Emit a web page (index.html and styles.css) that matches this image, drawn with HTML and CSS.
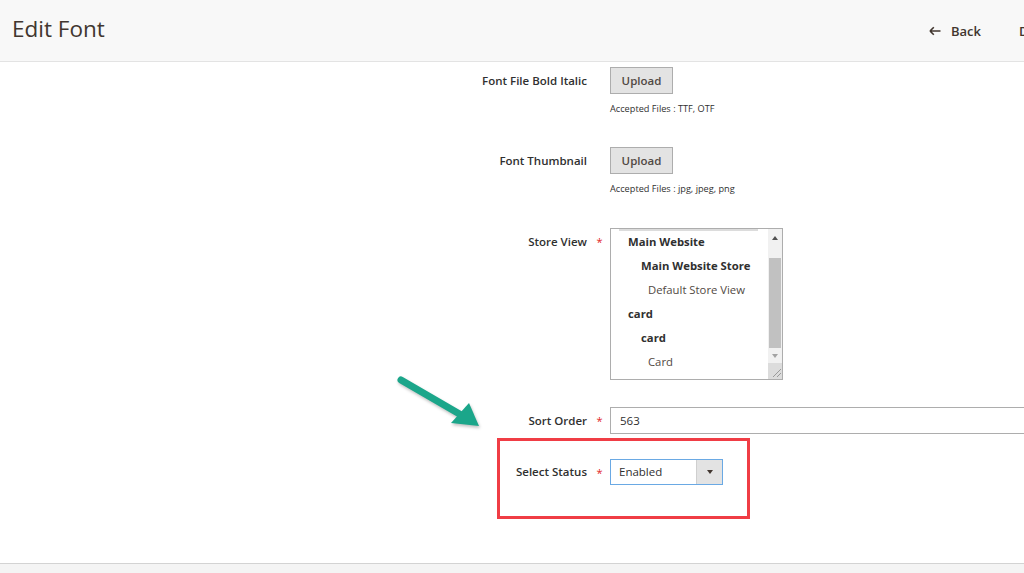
FILE: index.html
```html
<!DOCTYPE html>
<html lang="en">
<head>
<meta charset="utf-8">
<title>Edit Font</title>
<link rel="stylesheet" href="styles.css">
</head>
<body>
<header class="page-header">
  <h1 class="page-title">Edit Font</h1>
  <div class="page-actions">
    <button class="action-back" type="button">
      <svg class="back-icon" width="12" height="10" viewBox="0 0 12 10"><path d="M1 5H11.5M1 5L4.8 1.2M1 5L4.8 8.8" fill="none" stroke="#41362f" stroke-width="1.6"/></svg>
      <span>Back</span>
    </button>
    <button class="action-plain" type="button">Delete</button>
  </div>
</header>

<main class="content">
  <div class="field field-1">
    <div class="field-label">Font File Bold Italic</div>
    <div class="field-star"></div>
    <div class="field-control">
      <button class="upload-btn" type="button">Upload</button>
      <div class="note">Accepted Files : TTF, OTF</div>
    </div>
  </div>

  <div class="field field-2">
    <div class="field-label">Font Thumbnail</div>
    <div class="field-star"></div>
    <div class="field-control">
      <button class="upload-btn" type="button">Upload</button>
      <div class="note">Accepted Files : jpg, jpeg, png</div>
    </div>
  </div>

  <div class="field field-3">
    <div class="field-label">Store View</div>
    <div class="field-star">*</div>
    <div class="field-control">
      <div class="multiselect">
        <div class="ms-list">
          <div class="ms-scrolled"></div>
          <div class="ms-item lvl-1">Main Website</div>
          <div class="ms-item lvl-2">Main Website Store</div>
          <div class="ms-item lvl-3">Default Store View</div>
          <div class="ms-item lvl-1">card</div>
          <div class="ms-item lvl-2">card</div>
          <div class="ms-item lvl-3">Card</div>
        </div>
        <div class="ms-scrollbar">
          <div class="sb-btn sb-up"><span class="tri-up"></span></div>
          <div class="sb-gap"></div>
          <div class="sb-thumb"></div>
          <div class="sb-gap2"></div>
          <div class="sb-btn sb-down"><span class="tri-down"></span></div>
          <div class="sb-corner">
            <svg width="14" height="15" viewBox="0 0 14 15"><path d="M5 14L13 6M9 14L13 10" stroke="#9a9a9a" stroke-width="1"/></svg>
          </div>
        </div>
      </div>
    </div>
  </div>

  <div class="field field-4">
    <div class="field-label">Sort Order</div>
    <div class="field-star">*</div>
    <div class="field-control grow">
      <div class="text-input">563</div>
    </div>
  </div>

  <div class="field field-5">
    <div class="field-label">Select Status</div>
    <div class="field-star">*</div>
    <div class="field-control">
      <div class="select">
        <span class="select-value">Enabled</span>
        <span class="select-arrow"><span class="tri-down dark"></span></span>
      </div>
    </div>
  </div>

  <div class="highlight-box"></div>
  <svg class="pointer-arrow" width="100" height="70" viewBox="390 365 100 70">
    <g class="arrow-shape">
      <path d="M401 380L463 416" stroke="#1ba68a" stroke-width="7" stroke-linecap="round" fill="none"/>
      <polygon points="479,426 451,423 469,403" fill="#1ba68a"/>
    </g>
  </svg>
</main>

<footer class="page-footer"></footer>
</body>
</html>
```

FILE: styles.css
```css
* { box-sizing: border-box; }

html, body {
  margin: 0;
  padding: 0;
  width: 1024px;
  height: 573px;
  overflow: hidden;
  background: #ffffff;
  font-family: "Open Sans", "Noto Sans", sans-serif;
  color: #303030;
}

.page-header {
  height: 62px;
  background: #f8f8f8;
  border-bottom: 1px solid #e3e3e3;
  display: flex;
  align-items: center;
}

.page-title {
  flex: 1;
  margin: 0;
  padding-left: 12px;
  font-size: 22.5px;
  font-weight: 400;
  color: #41362f;
  line-height: 1;
  padding-bottom: 2px;
}

.page-actions {
  width: 95px;
  display: flex;
  align-items: center;
  gap: 38px;
  white-space: nowrap;
}

.action-back, .action-plain {
  border: 0;
  background: transparent;
  padding: 0;
  font-family: inherit;
  font-size: 13px;
  font-weight: 600;
  color: #41362f;
  display: flex;
  align-items: center;
  gap: 10px;
}

.back-icon { display: block; }

.content {
  position: relative;
  height: 501px;
  padding-top: 5px;
}

.field {
  display: flex;
  align-items: flex-start;
}

.field-2 { margin-top: 31px; }
.field-3 { margin-top: 32px; }
.field-4 { margin-top: 27px; }
.field-5 { margin-top: 25px; }

.field-label {
  width: 587px;
  text-align: right;
  font-size: 11.5px;
  font-weight: 600;
  line-height: 27px;
  color: #303030;
}

.field-5 .field-label { line-height: 26px; }

.field-star {
  width: 23px;
  text-align: center;
  color: #e22626;
  font-size: 11px;
  line-height: 27px;
  padding-left: 2px;
}

.field-control.grow { flex: 1; }

.upload-btn {
  display: block;
  width: 63px;
  height: 27px;
  background: #e3e3e3;
  border: 1px solid #adadad;
  font-family: inherit;
  font-size: 11.5px;
  font-weight: 600;
  color: #514943;
  padding: 0;
}

.note {
  margin-top: 8px;
  font-size: 9.2px;
  line-height: 14px;
  color: #303030;
}

.multiselect {
  width: 173px;
  height: 152px;
  border: 1px solid #adadad;
  display: flex;
  background: #fff;
}

.ms-list {
  flex: 1;
  padding-top: 0;
}

.ms-scrolled {
  height: 2px;
  margin: 0 10px 0 8px;
  background: #dcdcdc;
  margin-bottom: -1px;
}

.ms-item {
  font-size: 11.3px;
  line-height: 24px;
  white-space: nowrap;
}

.ms-item.lvl-1 { padding-left: 17px; font-weight: 700; color: #303030; }
.ms-item.lvl-2 { padding-left: 30px; font-weight: 700; color: #303030; }
.ms-item.lvl-3 { padding-left: 37px; font-weight: 400; color: #514943; }

.ms-scrollbar {
  width: 14px;
  background: #f1f1f1;
  display: flex;
  flex-direction: column;
}

.sb-btn {
  display: flex;
  align-items: center;
  justify-content: center;
}
.sb-up { height: 17px; }
.sb-gap { height: 12px; }
.sb-thumb {
  height: 90px;
  background: #c1c1c1;
  margin: 0 1px;
}
.sb-gap2 { height: 1px; }
.sb-down { height: 14px; }
.sb-corner {
  height: 16px;
  background: #dcdcdc;
}
.sb-corner svg { display: block; }

.tri-up {
  width: 0;
  height: 0;
  border-left: 3.5px solid transparent;
  border-right: 3.5px solid transparent;
  border-bottom: 4px solid #505050;
}
.tri-down {
  width: 0;
  height: 0;
  border-left: 3.5px solid transparent;
  border-right: 3.5px solid transparent;
  border-top: 4px solid #a3a3a3;
}
.tri-down.dark { border-top-color: #41362f; }

.text-input {
  height: 27px;
  border: 1px solid #adadad;
  border-right: 0;
  padding-left: 9px;
  font-size: 11.5px;
  line-height: 25px;
  color: #303030;
}

.select {
  width: 113px;
  height: 26px;
  border: 1px solid #6aa9e4;
  display: flex;
  align-items: stretch;
  background: #fff;
}
.select-value {
  flex: 1;
  padding-left: 8px;
  font-size: 11.5px;
  line-height: 24px;
  color: #303030;
}
.select-arrow {
  width: 26px;
  background: #e3e3e3;
  border-left: 1px solid #cfcfcf;
  display: flex;
  align-items: center;
  justify-content: center;
}

.highlight-box {
  position: absolute;
  left: 497px;
  top: 376px;
  width: 253px;
  height: 81px;
  border: 3px solid #f03d45;
}

.pointer-arrow {
  position: absolute;
  left: 390px;
  top: 303px;
  overflow: visible;
}
.arrow-shape { filter: drop-shadow(1px 2px 1.5px rgba(0,0,0,0.25)); }

.page-footer {
  height: 10px;
  background: #f4f4f4;
  border-top: 1px solid #d3d3d3;
}
```
